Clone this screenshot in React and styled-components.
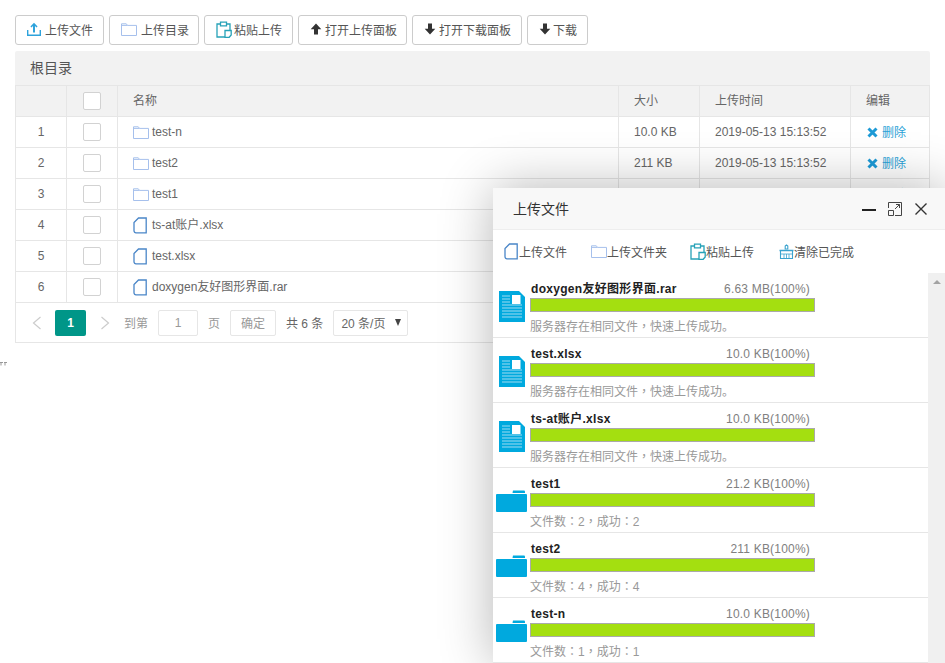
import React from 'react';
import styled, { createGlobalStyle } from 'styled-components';

const GlobalStyle = createGlobalStyle`
  html, body {
    margin: 0;
    height: 100%;
    overflow: hidden;
    background: #fff;
  }
  body {
    font-family: "Liberation Sans", "Noto Sans CJK SC", sans-serif;
    font-size: 12px;
    color: #666;
  }
`;

const Page = styled.div`
  padding: 15px;
`;

const Toolbar = styled.div`
  display: flex;
  gap: 5px;
`;

const ToolButton = styled.button`
  display: flex;
  align-items: center;
  gap: ${props => props.$gap || 4}px;
  box-sizing: border-box;
  height: 30px;
  padding: 0 ${props => props.$right || 10}px 2px 11px;
  border: 1px solid #ccc;
  border-radius: 3px;
  background: #fff;
  color: #555;
  font: inherit;
`;

const Panel = styled.div`
  width: 915px;
  margin-top: 6px;
`;

const PanelHeader = styled.div`
  height: 34px;
  line-height: 34px;
  padding-left: 15px;
  background: #f2f2f2;
  border-radius: 2px 2px 0 0;
  font-size: 14px;
  color: #555;
`;

const Table = styled.table`
  width: 914px;
  table-layout: fixed;
  border-collapse: collapse;
`;

const Th = styled.th`
  box-sizing: border-box;
  width: ${props => props.$width}px;
  height: 31px;
  padding: 0 0 0 ${props => (props.$center ? 0 : 15)}px;
  border: 1px solid #e6e6e6;
  background: #f2f2f2;
  font-weight: normal;
  line-height: 16px;
  text-align: ${props => (props.$center ? 'center' : 'left')};
  color: #666;
`;

const Td = styled.td`
  box-sizing: border-box;
  height: 31px;
  padding: 0 0 0 ${props => (props.$center ? 0 : 15)}px;
  border: 1px solid #e6e6e6;
  line-height: 16px;
  text-align: ${props => (props.$center ? 'center' : 'left')};
  color: #666;
`;

const Check = styled.span`
  display: block;
  box-sizing: border-box;
  width: 18px;
  height: 18px;
  margin: 0 auto;
  border: 1px solid #d2d2d2;
  border-radius: 2px;
  background: #fff;
`;

const NameCell = styled.div`
  display: flex;
  align-items: center;
  gap: ${props => (props.$folder ? 3 : 4)}px;
`;

const DeleteLink = styled.a`
  display: flex;
  align-items: center;
  gap: 4px;
  padding: 2px 0 0 1px;
  color: #2a9fd6;

  svg {
    margin-bottom: 2px;
  }
`;

const Pager = styled.div`
  display: flex;
  align-items: center;
  height: 39px;
  padding-left: 16px;
  border: 1px solid #e6e6e6;
  border-top: 0;
  color: #999;
`;

const PagerArrow = styled.span`
  display: flex;
  margin-left: ${props => props.$left || 0}px;
`;

const CurrentPage = styled.span`
  width: 31px;
  height: 26px;
  margin-left: 13px;
  line-height: 26px;
  text-align: center;
  background: #009688;
  border-radius: 2px;
  color: #fff;
  font-weight: bold;
`;

const PagerText = styled.span`
  margin-left: ${props => props.$left}px;
  color: ${props => props.$dark ? '#666' : '#999'};
`;

const PagerBox = styled.span`
  box-sizing: border-box;
  display: flex;
  align-items: center;
  justify-content: ${props => props.$between ? 'space-between' : 'center'};
  width: ${props => props.$width}px;
  height: 26px;
  margin-left: ${props => props.$left}px;
  padding: ${props => props.$between ? '0 6px 0 7px' : 0};
  border: 1px solid #e6e6e6;
  border-radius: 2px;
  background: #fff;
  color: ${props => props.$dark ? '#666' : '#999'};
`;

const Caret = styled.span`
  width: 0;
  height: 0;
  border-left: 3.5px solid transparent;
  border-right: 3.5px solid transparent;
  border-top: 7px solid #444;
`;

const Artifact = styled.svg`
  display: block;
  margin: 19px 0 0 -15px;
`;

const UploadWindow = styled.div`
  position: absolute;
  top: 188px;
  left: 493px;
  right: 0;
  bottom: 0;
  display: flex;
  flex-direction: column;
  background: #fff;
  box-shadow: 1px 1px 50px rgba(0, 0, 0, 0.3);
`;

const WindowTitle = styled.div`
  display: flex;
  align-items: center;
  justify-content: space-between;
  flex: none;
  box-sizing: border-box;
  height: 42px;
  padding: 0 17px 2px 20px;
  background: #f8f8f8;
  border-bottom: 1px solid #eee;
  font-size: 14px;
  color: #333;
`;

const WindowControls = styled.div`
  display: flex;
  align-items: center;
  gap: 12px;
  padding-top: 2px;
`;

const WindowTools = styled.div`
  display: flex;
  align-items: center;
  flex: none;
  height: 43px;
  padding-left: 11px;
`;

const WindowTool = styled.span`
  display: flex;
  align-items: center;
  margin-left: ${props => props.$left || 0}px;
  color: #555;
`;

const WindowBody = styled.div`
  display: flex;
  flex: 1;
  min-height: 0;
  overflow: hidden;
`;

const TaskList = styled.div`
  flex: 1;
  min-width: 0;
`;

const TaskRow = styled.div`
  display: flex;
  box-sizing: border-box;
  height: 65px;
  padding-left: 3px;
  border-bottom: 1px solid #e6e6e6;
`;

const TaskIcon = styled.div`
  display: flex;
  align-items: flex-end;
  justify-content: center;
  flex: none;
  width: 31px;
  height: ${props => (props.$folder ? 44 : 49)}px;
`;

const TaskMain = styled.div`
  width: 285px;
  margin-left: 3px;
  padding-top: 9px;
`;

const TaskHead = styled.div`
  display: flex;
  justify-content: space-between;
  height: 15px;
  padding-right: 5px;
  line-height: 15px;
`;

const TaskName = styled.span`
  margin-left: 1px;
  font-weight: bold;
  letter-spacing: 0.3px;
  color: #222;
`;

const TaskSize = styled.span`
  letter-spacing: 0.2px;
  color: #808080;
`;

const Bar = styled.div`
  box-sizing: border-box;
  height: 14px;
  margin-top: 1px;
  border: 1px solid #aaa;
  background: #a4df10;
`;

const TaskStatus = styled.div`
  margin-top: 6px;
  line-height: 16px;
  color: #999;
`;

// fullwidth marks sit centred in their cell in the picture, as the TC face draws them
const Mark = styled.span`
  font-family: "Noto Sans CJK TC", sans-serif;
`;

const ScrollTrack = styled.div`
  display: flex;
  justify-content: center;
  flex: none;
  width: 17px;
  padding-top: 7px;
  background: #f0f0f0;
`;

const ScrollArrow = styled.span`
  width: 0;
  height: 0;
  border-left: 4px solid transparent;
  border-right: 4px solid transparent;
  border-bottom: 4px solid #a3a3a3;
`;

const UploadIcon = () => (
  <svg width="14" height="14" viewBox="0 0 14 14" fill="none" stroke="#2ea3dc" strokeWidth="1.4">
    <path d="M0.7 8v5.3h12.6V8" />
    <path d="M7 10.5V2.5" strokeWidth="2" />
    <path d="M4 5l3-3.2L10 5" strokeWidth="1.6" />
  </svg>
);

const FolderOutline = () => (
  <svg width="16" height="13" viewBox="0 0 16 13" fill="#fff" stroke="#a6c0ec">
    <path d="M0.5 12.5V0.8h4.8l1.2 1.6h9v10.1z" />
    <path d="M0.5 2.4h6" />
  </svg>
);

const ClipboardIcon = ({ size = 16 }) => (
  <svg width={size} height={size + 1} viewBox="0 0 16 17" fill="none" stroke="#27a2b8" strokeWidth="1.3">
    <path d="M4 3H1v13h8" />
    <path d="M11 3h3v6" />
    <path d="M4.5 1.2h6v3.6h-6z" />
    <path d="M9 9.5h6.2v4.5l-2 2.3H9z" fill="#fff" />
  </svg>
);

const ArrowUp = () => (
  <svg width="12" height="12" viewBox="0 0 12 12" fill="#333">
    <path d="M6 0.5l5.3 5.7H8V11.5H4V6.2H0.7z" />
  </svg>
);

const ArrowDown = () => (
  <svg width="12" height="12" viewBox="0 0 12 12" fill="#333">
    <path d="M6 11.5L0.7 5.8H4V0.5h4v5.3h3.3z" />
  </svg>
);

const FileOutline = () => (
  <svg width="15" height="17" viewBox="0 0 15 17" fill="#fff" stroke="#4a86c8" strokeWidth="1.3">
    <path d="M5.5 1H13.2V15.8H3A2 2 0 0 1 1 13.8V5.6z" />
  </svg>
);

const BasketIcon = () => (
  <svg width="15" height="15" viewBox="0 0 15 15" fill="none" stroke="#3aa3cf" strokeWidth="1.1">
    <path d="M7.5 1l-1.3 1v3h2.6V2z" />
    <path d="M0.5 6.5h14" strokeWidth="1.5" />
    <path d="M1.5 7v7.5h12V7" />
    <path d="M1.5 10h12M5 10v4.5M7.5 10v4.5M10 10v4.5" strokeWidth="0.8" />
  </svg>
);

const CrossIcon = () => (
  <svg width="11" height="11" viewBox="0 0 11 11" stroke="#1d9ad6" strokeWidth="3">
    <path d="M1.5 1.5l8 8M9.5 1.5l-8 8" />
  </svg>
);

const PagerChevron = ({ flip }) => (
  <svg width="10" height="14" viewBox="0 0 10 14" fill="none" stroke="#ccc" strokeWidth="1.2">
    <path d={flip ? 'M1.5 1l7 6-7 6' : 'M8.5 1l-7 6 7 6'} />
  </svg>
);

const BigFile = () => (
  <svg width="26" height="31" viewBox="0 0 26 31">
    <path d="M0 0H20L26 6V31H0z" fill="#00a9de" />
    <path d="M13 4h8.5v9H13z" fill="#fff" />
    <path d="M3 5h8M3 8h8M3 11h8M3 14h20M3 17h20M3 20h20M3 23h20M3 26h20" stroke="#9fdcf2" strokeWidth="1" />
  </svg>
);

const BigFolder = () => (
  <svg width="31" height="22" viewBox="0 0 31 22">
    <path d="M17 0.5h11a1 1 0 0 1 1 1V3H16.5z" fill="#00a9de" />
    <path d="M1 4h29a1 1 0 0 1 1 1v16a1 1 0 0 1-1 1H1a1 1 0 0 1-1-1V5a1 1 0 0 1 1-1z" fill="#00a9de" />
  </svg>
);

const files = [
  { no: 1, name: 'test-n', size: '10.0 KB', folder: true, time: '2019-05-13 15:13:52' },
  { no: 2, name: 'test2', size: '211 KB', folder: true, time: '2019-05-13 15:13:52' },
  { no: 3, name: 'test1', size: '21.2 KB', folder: true, time: '2019-05-13 15:13:52' },
  { no: 4, name: 'ts-at账户.xlsx', size: '10.0 KB', time: '2019-05-13 15:13:52' },
  { no: 5, name: 'test.xlsx', size: '10.0 KB', time: '2019-05-13 15:13:52' },
  { no: 6, name: 'doxygen友好图形界面.rar', size: '6.63 MB', time: '2019-05-13 15:13:52' },
];

const sameFile = '服务器存在相同文件，快速上传成功。';

const tasks = [
  { name: 'doxygen友好图形界面.rar', size: '6.63 MB(100%)', status: sameFile },
  { name: 'test.xlsx', size: '10.0 KB(100%)', status: sameFile },
  { name: 'ts-at账户.xlsx', size: '10.0 KB(100%)', status: sameFile },
  { name: 'test1', size: '21.2 KB(100%)', status: '文件数：2，成功：2', folder: true },
  { name: 'test2', size: '211 KB(100%)', status: '文件数：4，成功：4', folder: true },
  { name: 'test-n', size: '10.0 KB(100%)', status: '文件数：1，成功：1', folder: true },
];

const statusParts = status =>
  status.split(/([，：])/).map((part, i) => (i % 2 ? <Mark key={i}>{part}</Mark> : part));

export default function App() {
  return (
    <>
      <GlobalStyle />
      <Page>
        <Toolbar>
          <ToolButton><UploadIcon />上传文件</ToolButton>
          <ToolButton $right={9}><FolderOutline />上传目录</ToolButton>
          <ToolButton $gap={2}><ClipboardIcon />粘贴上传</ToolButton>
          <ToolButton $gap={3} $right={9}><ArrowUp />打开上传面板</ToolButton>
          <ToolButton $gap={3}><ArrowDown />打开下载面板</ToolButton>
          <ToolButton $gap={2}><ArrowDown />下载</ToolButton>
        </Toolbar>
        <Panel>
          <PanelHeader>根目录</PanelHeader>
          <Table>
            <thead>
              <tr>
                <Th $width={51} $center />
                <Th $width={51} $center><Check /></Th>
                <Th $width={501}>名称</Th>
                <Th $width={81}>大小</Th>
                <Th $width={151}>上传时间</Th>
                <Th $width={79}>编辑</Th>
              </tr>
            </thead>
            <tbody>
              {files.map(file => (
                <tr key={file.no}>
                  <Td $center>{file.no}</Td>
                  <Td $center><Check /></Td>
                  <Td>
                    <NameCell $folder={file.folder}>
                      {file.folder ? <FolderOutline /> : <FileOutline />}
                      {file.name}
                    </NameCell>
                  </Td>
                  <Td>{file.size}</Td>
                  <Td>{file.time}</Td>
                  <Td>
                    <DeleteLink><CrossIcon />删除</DeleteLink>
                  </Td>
                </tr>
              ))}
            </tbody>
          </Table>
          <Pager>
            <PagerArrow><PagerChevron /></PagerArrow>
            <CurrentPage>1</CurrentPage>
            <PagerArrow $left={14}><PagerChevron flip /></PagerArrow>
            <PagerText $left={14}>到第</PagerText>
            <PagerBox $width={40} $left={10}>1</PagerBox>
            <PagerText $left={10}>页</PagerText>
            <PagerBox $width={46} $left={10}>确定</PagerBox>
            <PagerText $left={10} $dark>共 6 条</PagerText>
            <PagerBox $width={75} $left={10} $between $dark>20 条/页<Caret /></PagerBox>
          </Pager>
        </Panel>
        <Artifact width="8" height="4" viewBox="0 0 8 4" stroke="#999">
          <path d="M0 0.5h3M4 0.5h3M1 0.5v3M5 0.5v3" />
        </Artifact>
      </Page>

      <UploadWindow>
        <WindowTitle>
          上传文件
          <WindowControls>
            <svg width="14" height="14" viewBox="0 0 14 14" stroke="#222" strokeWidth="2">
              <path d="M0 8h14" />
            </svg>
            <svg width="14" height="14" viewBox="0 0 14 14" fill="none" stroke="#444">
              <path d="M0.5 6V0.5h13v13H7" />
              <path d="M0.5 8.5h5v5h-5z" />
              <path d="M7 7l4.5-4.5M8 2.5h3.5V6" />
            </svg>
            <svg width="14" height="14" viewBox="0 0 14 14" stroke="#333" strokeWidth="1.4">
              <path d="M1.5 1.5l11 11M12.5 1.5l-11 11" />
            </svg>
          </WindowControls>
        </WindowTitle>
        <WindowTools>
          <WindowTool><FileOutline />上传文件</WindowTool>
          <WindowTool $left={24}><FolderOutline />上传文件夹</WindowTool>
          <WindowTool $left={23}><ClipboardIcon />粘贴上传</WindowTool>
          <WindowTool $left={25}><BasketIcon />清除已完成</WindowTool>
        </WindowTools>
        <WindowBody>
          <TaskList>
            {tasks.map(task => (
              <TaskRow key={task.name}>
                <TaskIcon $folder={task.folder}>{task.folder ? <BigFolder /> : <BigFile />}</TaskIcon>
                <TaskMain>
                  <TaskHead>
                    <TaskName>{task.name}</TaskName>
                    <TaskSize>{task.size}</TaskSize>
                  </TaskHead>
                  <Bar />
                  <TaskStatus>{statusParts(task.status)}</TaskStatus>
                </TaskMain>
              </TaskRow>
            ))}
          </TaskList>
          <ScrollTrack><ScrollArrow /></ScrollTrack>
        </WindowBody>
      </UploadWindow>
    </>
  );
}
